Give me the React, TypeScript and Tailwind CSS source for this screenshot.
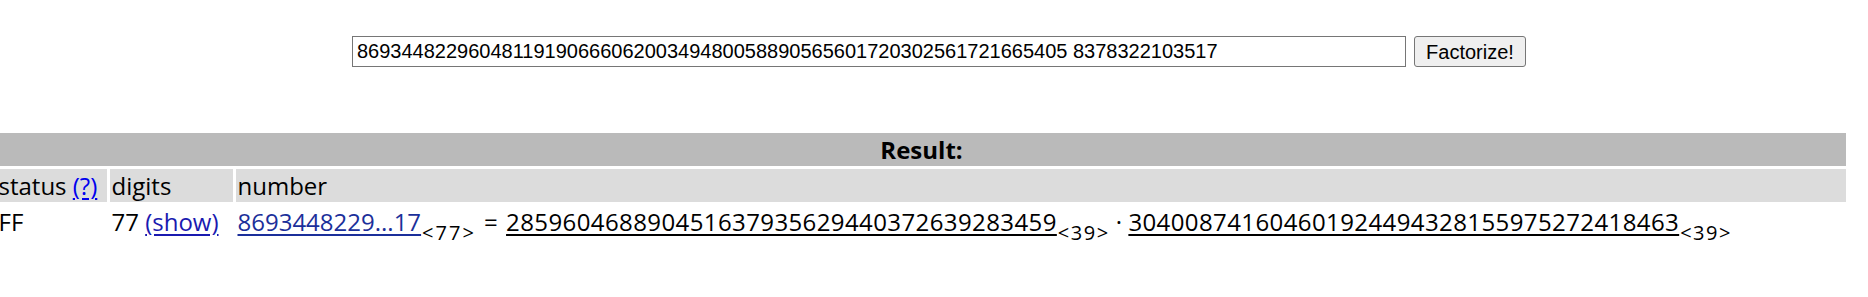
import React from "react";

const sans = "font-['Open_Sans',sans-serif]";

function Factor({ value, digits }: { value: string; digits: number }) {
  return (
    <>
      <a className="text-black underline decoration-[1.5px] underline-offset-[3px] tracking-[0.4px]">{value}</a>
      <sub className="text-[20px] bottom-[-9px] tracking-[1.5px] ml-[1px]">&lt;{digits}&gt;</sub>
    </>
  );
}

export default function App() {
  return (
    <div className="w-[1868px] h-[297px] bg-white overflow-hidden">
      <form className="flex justify-center items-center gap-[8px] pt-[36px] pl-[10px]">
        <input
          type="text"
          defaultValue="8693448229604811919066606200349480058890565601720302561721665405 8378322103517"
          className="w-[1054px] h-[31px] border-[1.5px] border-[#767676] px-[4px] text-[20px] text-black font-['Liberation_Sans',Arial,sans-serif] outline-none"
        />
        <button
          type="button"
          className="w-[112px] h-[31px] border-[1.5px] border-[#767676] rounded-[3px] bg-[#efefef] text-[20px] text-black font-['Liberation_Sans',Arial,sans-serif]"
        >
          Factorize!
        </button>
      </form>

      <div className="mt-[63px] overflow-hidden">
        <table
          className={`ml-[-6px] w-[1855px] border-separate border-spacing-[3px] text-[24px] leading-[30px] text-black ${sans}`}
        >
          <tbody>
            <tr>
              <td colSpan={3} className="bg-[#bababa] text-center font-bold px-[1.5px] pt-[2px] pb-[1px]">
                Result:
              </td>
            </tr>
            <tr>
              <td className="bg-[#dcdcdc] w-[110px] whitespace-nowrap px-[1.5px] pt-[2px] pb-[1px]">
                status <a className="text-[#0000ee] underline underline-offset-[3px]">(?)</a>
              </td>
              <td className="bg-[#dcdcdc] w-[123px] px-[1.5px] pt-[2px] pb-[1px]">digits</td>
              <td className="bg-[#dcdcdc] px-[1.5px] pt-[2px] pb-[1px]">number</td>
            </tr>
            <tr>
              <td className="px-[1.5px] pt-[2px] pb-[1px]">FF</td>
              <td className="px-[1.5px] pt-[2px] pb-[1px] whitespace-nowrap">
                77 <a className="text-[#1a1ab0] underline underline-offset-[3px]">(show)</a>
              </td>
              <td className="px-[1.5px] pt-[2px] pb-[1px] whitespace-nowrap">
                <a className="text-[#1b2f9a] underline decoration-[1.5px] underline-offset-[3px]">8693448229...17</a>
                <sub className="text-[20px] bottom-[-9px] tracking-[2px] ml-[1px]">&lt;77&gt;</sub>{" "}
                <span className="mx-[2px]">=</span>{" "}
                <Factor value="285960468890451637935629440372639283459" digits={39} />{" "}
                <span>·</span>{" "}
                <Factor value="304008741604601924494328155975272418463" digits={39} />
              </td>
            </tr>
          </tbody>
        </table>
      </div>
    </div>
  );
}
